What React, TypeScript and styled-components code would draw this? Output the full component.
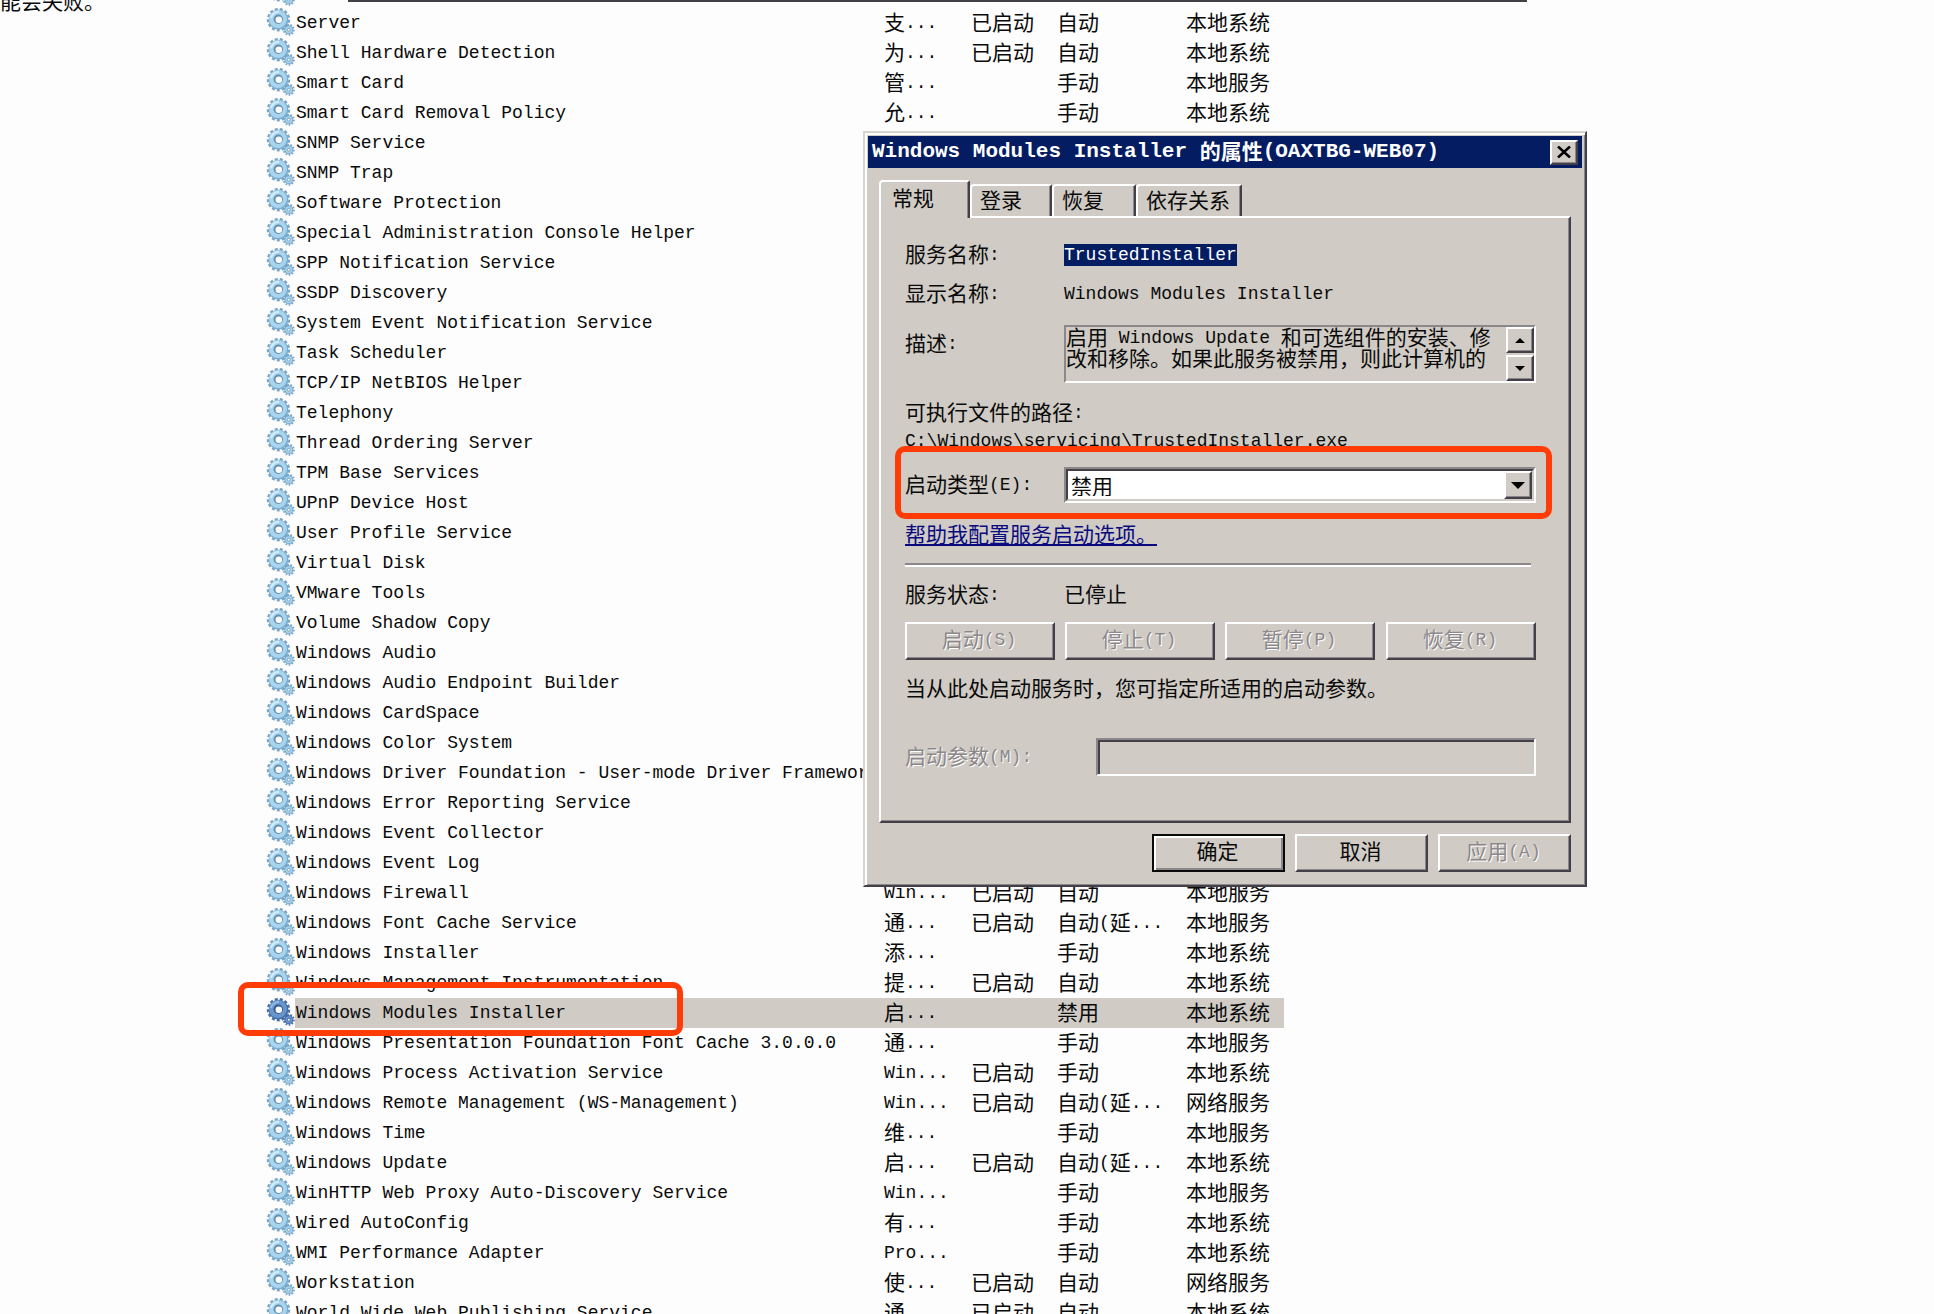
import React from "react";
import styled, { createGlobalStyle, css } from "styled-components";

const face = "#d0ccc5";
const shade = "#8b878a";
const dark = "#434147";
const navy = "#041d62";
const mark = "#ff3b08";

const GlobalStyle = createGlobalStyle`
  * { box-sizing: border-box; }
  body {
    margin: 0;
    background: #fdfdfd;
    color: #0a0a0a;
    font: 18px/30px "Liberation Mono", "Noto Sans CJK SC", monospace;
    font-weight: 400;
  }
  button, input, select { font: inherit; color: inherit; margin: 0; border-radius: 0; }
`;

/* Han glyphs are set larger than the Latin text so that one spans two columns. */
const Han = styled.span`
  font-family: "Noto Sans CJK SC", sans-serif;
  font-size: 21px;
  line-height: 0;
  vertical-align: -2px;
`;

const Mixed = ({ children }: { children: string }) => (
  <>
    {children
      .split(/([\u3000-\u9fff\uff00-\uffef]+)/)
      .filter(Boolean)
      .map((part, i) =>
        /[\u3000-\u9fff\uff00-\uffef]/.test(part) ? <Han key={i}>{part}</Han> : part
      )}
  </>
);

const Screen = styled.div`
  position: relative;
  height: 100vh;
  overflow: hidden;
  display: grid;
  grid-template-columns: 266px 1fr;
`;

const Sidebar = styled.aside`
  margin-top: -13px;
  white-space: nowrap;
`;

const Main = styled.main`
  min-width: 0;
  margin-top: -22px;
`;

const TopRule = styled.div`
  position: absolute;
  top: 0;
  left: 348px;
  width: 1179px;
  height: 2px;
  background: ${dark};
`;

/* ---------- service list ---------- */

const Table = styled.table`
  width: 1018px;
  table-layout: fixed;
  border-collapse: collapse;
`;

const Col = styled.col<{ $w: number }>`
  width: ${(p) => p.$w}px;
`;

const Cell = styled.td<{ $on?: boolean }>`
  height: 30px;
  padding: 0 0 0 1px;
  line-height: 30px;
  white-space: pre;
  vertical-align: top;
  background: ${(p) => (p.$on ? face : "transparent")};
`;

const IconCell = styled.td`
  position: relative;
  height: 30px;
  padding: 0;
  vertical-align: top;
  line-height: 0;
`;

const GearSvg = styled.svg`
  display: block;
  width: 29px;
  height: 28px;
`;

const Highlight = styled.div`
  position: absolute;
  border: 6px solid ${mark};
  border-radius: 10px;
  pointer-events: none;
`;

const RowHighlight = styled(Highlight)`
  z-index: 1;
  left: -28px;
  top: -16px;
  width: 445px;
  height: 54px;
`;

const Gear = ({ on }: { on?: boolean }) => {
  const rim = on ? "#4a6fa3" : "#7ba5c2";
  const body = on ? "#6895cb" : "#a9d4ee";
  const low = on ? "#426da8" : "#78abd0";
  return (
    <GearSvg viewBox="0 0 29 28" aria-hidden="true">
      <circle cx="12.5" cy="11.7" r="10.4" fill="none" stroke={rim} strokeWidth="2.6" pathLength="26" strokeDasharray="1.2 .8" />
      <circle cx="12.5" cy="11.7" r="9.9" fill={low} />
      <circle cx="12" cy="11.1" r="9" fill={body} />
      <path d="M5 10a7.4 7.4 0 0 1 8-6" fill="none" stroke={on ? "#93b8e2" : "#d5edf9"} strokeWidth="2" />
      <circle cx="12.3" cy="11.2" r="4.7" fill={on ? "#36598f" : "#668fae"} />
      <circle cx="12.8" cy="11.7" r="3.3" fill="#fafdff" />
      <circle cx="22.8" cy="21.7" r="5" fill="none" stroke={rim} strokeWidth="2" pathLength="20" strokeDasharray="1.1 .9" />
      <circle cx="22.8" cy="21.7" r="4" fill={body} stroke={low} />
      <circle cx="22.8" cy="21.7" r="1.5" fill="#f2f9fd" stroke={rim} />
    </GearSvg>
  );
};

type Service = [string, string?, string?, string?, string?];
const R = "已启动";
const A = "自动";
const M = "手动";
const D = "自动(延...";
const SYS = "本地系统";
const SRV = "本地服务";
const NET = "网络服务";

const services: Service[] = [
  [""],
  ["Server", "支...", R, A, SYS],
  ["Shell Hardware Detection", "为...", R, A, SYS],
  ["Smart Card", "管...", "", M, SRV],
  ["Smart Card Removal Policy", "允...", "", M, SYS],
  ["SNMP Service"],
  ["SNMP Trap"],
  ["Software Protection"],
  ["Special Administration Console Helper"],
  ["SPP Notification Service"],
  ["SSDP Discovery"],
  ["System Event Notification Service"],
  ["Task Scheduler"],
  ["TCP/IP NetBIOS Helper"],
  ["Telephony"],
  ["Thread Ordering Server"],
  ["TPM Base Services"],
  ["UPnP Device Host"],
  ["User Profile Service"],
  ["Virtual Disk"],
  ["VMware Tools"],
  ["Volume Shadow Copy"],
  ["Windows Audio"],
  ["Windows Audio Endpoint Builder"],
  ["Windows CardSpace"],
  ["Windows Color System"],
  ["Windows Driver Foundation - User-mode Driver Framework"],
  ["Windows Error Reporting Service"],
  ["Windows Event Collector"],
  ["Windows Event Log"],
  ["Windows Firewall", "Win...", R, A, SRV],
  ["Windows Font Cache Service", "通...", R, D, SRV],
  ["Windows Installer", "添...", "", M, SYS],
  ["Windows Management Instrumentation", "提...", R, A, SYS],
  ["Windows Modules Installer", "启...", "", "禁用", SYS],
  ["Windows Presentation Foundation Font Cache 3.0.0.0", "通...", "", M, SRV],
  ["Windows Process Activation Service", "Win...", R, M, SYS],
  ["Windows Remote Management (WS-Management)", "Win...", R, D, NET],
  ["Windows Time", "维...", "", M, SRV],
  ["Windows Update", "启...", R, D, SYS],
  ["WinHTTP Web Proxy Auto-Discovery Service", "Win...", "", M, SRV],
  ["Wired AutoConfig", "有...", "", M, SYS],
  ["WMI Performance Adapter", "Pro...", "", M, SYS],
  ["Workstation", "使...", R, A, NET],
  ["World Wide Web Publishing Service", "通...", R, A, SYS],
];

const SELECTED = "Windows Modules Installer";

const ServiceRow = ({ row }: { row: Service }) => {
  const on = row[0] === SELECTED;
  return (
    <tr aria-selected={on}>
      <IconCell>
        <Gear on={on} />
        {on && <RowHighlight />}
      </IconCell>
      {[0, 1, 2, 3, 4].map((i) => (
        <Cell key={i} $on={on}>
          <Mixed>{row[i] ?? ""}</Mixed>
        </Cell>
      ))}
    </tr>
  );
};

/* ---------- properties dialog ---------- */

const raised = css`
  background: ${face};
  border: 2px solid;
  border-color: #fff ${dark} ${dark} #fff;
  box-shadow: inset -1px -1px ${shade};
`;

const sunken = css`
  border: 2px solid;
  border-color: ${shade} #fff #fff ${shade};
`;

const Dialog = styled.section`
  position: absolute;
  left: 863px;
  top: 131px;
  width: 724px;
  padding: 3px 3px 13px;
  background: ${face};
  border: 2px solid;
  border-color: #d8d5cf ${dark} ${dark} #d8d5cf;
  box-shadow: inset 2px 2px #fff, inset -1px -1px ${shade};
`;

const TitleBar = styled.header`
  display: flex;
  align-items: center;
  justify-content: space-between;
  height: 32px;
  padding: 0 4px;
  background: ${navy};
  color: #fff;
`;

const Title = styled.h1`
  margin: 0;
  font-size: 21px;
  font-weight: 700;
  line-height: 30px;
  white-space: pre;
`;

const CloseButton = styled.button`
  ${raised}
  display: flex;
  align-items: center;
  justify-content: center;
  width: 28px;
  height: 25px;
  padding: 0;
`;

const Tabs = styled.div`
  display: flex;
  align-items: flex-end;
  margin: 12px 0 0 11px;
`;

const Tab = styled.button<{ $w: number; $active?: boolean }>`
  position: relative;
  z-index: ${(p) => (p.$active ? 1 : 0)};
  width: ${(p) => p.$w}px;
  height: ${(p) => (p.$active ? 38 : 32)}px;
  margin-bottom: ${(p) => (p.$active ? -2 : 0)}px;
  padding: 0 0 ${(p) => (p.$active ? 3 : 0)}px ${(p) => (p.$active ? 11 : 8)}px;
  text-align: left;
  line-height: 28px;
  white-space: nowrap;
  background: ${face};
  border: 2px solid;
  border-color: #fff ${dark} transparent #fff;
  border-bottom-width: 0;
  border-radius: 4px 2px 0 0;
  box-shadow: inset -1px 0 ${shade};
`;

const Panel = styled.div`
  display: flex;
  flex-direction: column;
  margin: 0 11px;
  padding: 22px 33px 45px 24px;
  border: 2px solid;
  border-color: #fff ${dark} ${dark} #fff;
  box-shadow: inset -1px -1px ${shade};
`;

const Field = styled.div<{ $top?: number; $label?: number; $start?: boolean }>`
  display: grid;
  grid-template-columns: ${(p) => p.$label ?? 159}px 1fr;
  align-items: ${(p) => (p.$start ? "start" : "center")};
  margin-top: ${(p) => p.$top ?? 0}px;
  white-space: nowrap;
`;

const Line = styled.div<{ $top?: number }>`
  height: 28px;
  margin-top: ${(p) => p.$top ?? 0}px;
  line-height: 28px;
  white-space: nowrap;
`;

const Caption = styled.span`
  line-height: 38px;
`;

const etched = css`
  color: ${shade};
  text-shadow: 1px 1px #fff;
`;

const Label = styled.label<{ $off?: boolean }>`
  ${(p) => p.$off && etched}
`;

const Selected = styled.span`
  padding: 1px 0;
  background: ${navy};
  color: #fff;
`;

const Description = styled.div`
  ${sunken}
  display: flex;
  justify-content: space-between;
  height: 58px;
  line-height: 21px;
`;

const DescriptionText = styled.div`
  padding-top: 1px;
  white-space: pre;
`;

const Scroller = styled.div`
  display: flex;
  flex-direction: column;
  gap: 2px;
  width: 28px;
`;

const ScrollButton = styled.button`
  ${raised}
  display: flex;
  flex: 1;
  align-items: center;
  justify-content: center;
  padding: 0;
`;

const SelectWrap = styled.div`
  position: relative;
  height: 36px;
  border: 2px solid;
  border-color: ${shade} #fff #fff ${shade};
`;

const Select = styled.select`
  appearance: none;
  display: block;
  width: 100%;
  height: 32px;
  padding: 0 3px 3px;
  border: 2px solid;
  border-color: ${dark} ${face} ${face} ${dark};
  background: #fff;
  font-family: "Noto Sans CJK SC", sans-serif;
  font-size: 21px;
  line-height: 28px;
`;

const SelectArrow = styled.span`
  ${raised}
  position: absolute;
  right: 2px;
  top: 2px;
  display: flex;
  align-items: center;
  justify-content: center;
  width: 28px;
  height: 28px;
  pointer-events: none;
`;

const SelectHighlight = styled(Highlight)`
  left: 30px;
  top: 313px;
  width: 657px;
  height: 73px;
`;

const HelpLink = styled.a`
  color: #0a0a80;
  text-decoration: underline 2px;
  text-underline-offset: 4px;
  text-decoration-skip-ink: none;
`;

const Separator = styled.hr`
  align-self: stretch;
  height: 4px;
  margin: 14px 5px 13px 0;
  border: 0;
  border-top: 2px solid ${shade};
  border-bottom: 2px solid #fff;
`;

const Button = styled.button<{ $w: number; $primary?: boolean }>`
  ${raised}
  width: ${(p) => p.$w}px;
  height: 38px;
  padding: 0 2px 2px 0;
  line-height: 30px;
  &:disabled {
    ${etched}
  }
  ${(p) =>
    p.$primary &&
    css`
      border-color: #0a0a0a;
      box-shadow: inset 2px 2px #fff, inset -2px -2px ${shade};
    `}
`;

const ServiceButtons = styled.div`
  display: flex;
  gap: 10px;
  margin-top: 12px;
  & > :last-child { margin-left: auto; }
`;

const ParamInput = styled.input`
  width: 100%;
  height: 38px;
  padding: 0 6px;
  background: ${face};
  border: 2px solid;
  border-color: ${shade} #fff #fff ${shade};
  box-shadow: inset 2px 2px ${dark};
`;

const Footer = styled.footer`
  display: flex;
  justify-content: flex-end;
  gap: 10px;
  margin: 11px 11px 0;
`;

const Arrow = ({ up, size = 10 }: { up?: boolean; size?: number }) => (
  <svg width={size} height={size / 2} viewBox="0 0 10 5" aria-hidden="true">
    <path d={up ? "M0 5 5 0l5 5z" : "M0 0h10L5 5z"} fill="#000" />
  </svg>
);

const PropertiesDialog = () => (
  <Dialog role="dialog" aria-labelledby="dialog-title">
    <TitleBar>
      <Title id="dialog-title">
        <Mixed>Windows Modules Installer 的属性(OAXTBG-WEB07)</Mixed>
      </Title>
      <CloseButton aria-label="关闭">
        <svg width="14" height="12" viewBox="0 0 14 12" aria-hidden="true">
          <path d="M1 .5 13 11.5M13 .5 1 11.5" stroke="#000" strokeWidth="2.6" />
        </svg>
      </CloseButton>
    </TitleBar>
    <Tabs role="tablist">
      <Tab role="tab" aria-selected $w={91} $active><Mixed>常规</Mixed></Tab>
      <Tab role="tab" $w={82}><Mixed>登录</Mixed></Tab>
      <Tab role="tab" $w={84}><Mixed>恢复</Mixed></Tab>
      <Tab role="tab" $w={106}><Mixed>依存关系</Mixed></Tab>
    </Tabs>
    <Panel role="tabpanel">
      <Field>
        <span><Mixed>服务名称:</Mixed></span>
        <span><Selected>TrustedInstaller</Selected></span>
      </Field>
      <Field $top={9}>
        <span><Mixed>显示名称:</Mixed></span>
        <span>Windows Modules Installer</span>
      </Field>
      <Field $top={16} $start>
        <Caption><Mixed>描述:</Mixed></Caption>
        <Description>
          <DescriptionText>
            <Mixed>{"启用 Windows Update 和可选组件的安装、修\n改和移除。如果此服务被禁用，则此计算机的"}</Mixed>
          </DescriptionText>
          <Scroller>
            <ScrollButton aria-label="向上滚动"><Arrow up /></ScrollButton>
            <ScrollButton aria-label="向下滚动"><Arrow /></ScrollButton>
          </Scroller>
        </Description>
      </Field>
      <Line $top={16}><Mixed>可执行文件的路径:</Mixed></Line>
      <Line>C:\Windows\servicing\TrustedInstaller.exe</Line>
      <Field $top={12}>
        <Label htmlFor="startup"><Mixed>启动类型(E):</Mixed></Label>
        <SelectWrap>
          <Select id="startup" defaultValue="禁用">
            <option>禁用</option>
          </Select>
          <SelectArrow><Arrow size={14} /></SelectArrow>
        </SelectWrap>
      </Field>
      <Line $top={18}>
        <HelpLink href="#help"><Mixed>帮助我配置服务启动选项。</Mixed></HelpLink>
      </Line>
      <Separator />
      <Field>
        <span><Mixed>服务状态:</Mixed></span>
        <span><Mixed>已停止</Mixed></span>
      </Field>
      <ServiceButtons>
        {["启动(S)", "停止(T)", "暂停(P)", "恢复(R)"].map((text) => (
          <Button key={text} $w={150} disabled><Mixed>{text}</Mixed></Button>
        ))}
      </ServiceButtons>
      <Line $top={15}><Mixed>当从此处启动服务时，您可指定所适用的启动参数。</Mixed></Line>
      <Field $top={35} $label={191}>
        <Label htmlFor="params" $off><Mixed>启动参数(M):</Mixed></Label>
        <ParamInput id="params" disabled />
      </Field>
    </Panel>
    <Footer>
      <Button $w={133} $primary><Mixed>确定</Mixed></Button>
      <Button $w={133}><Mixed>取消</Mixed></Button>
      <Button $w={133} disabled><Mixed>应用(A)</Mixed></Button>
    </Footer>
    <SelectHighlight />
  </Dialog>
);

export default function App() {
  return (
    <Screen>
      <GlobalStyle />
      <Sidebar><Mixed>能会失败。</Mixed></Sidebar>
      <Main>
        <Table>
          <colgroup>
            <Col $w={29} />
            <Col $w={588} />
            <Col $w={87} />
            <Col $w={86} />
            <Col $w={129} />
            <Col $w={99} />
          </colgroup>
          <tbody>
            {services.map((row, i) => (
              <ServiceRow key={i} row={row} />
            ))}
          </tbody>
        </Table>
      </Main>
      <TopRule />
      <PropertiesDialog />
    </Screen>
  );
}
